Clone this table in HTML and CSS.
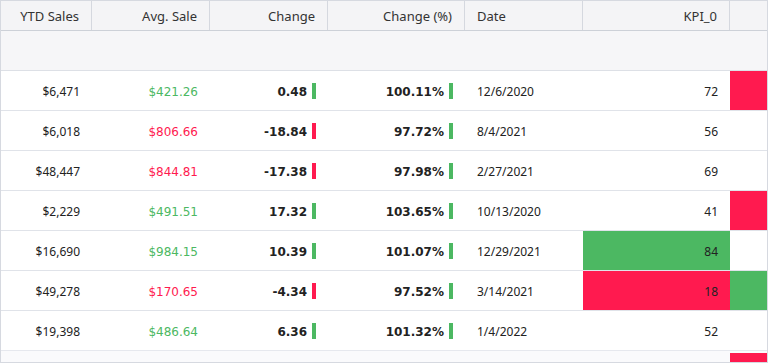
FILE: index.html
```html
<!DOCTYPE html>
<html lang="en">
<head>
    <meta charset="UTF-8">
    <meta name="viewport" content="width=device-width, initial-scale=1.0">
    <title>Sales Grid</title>
    <link rel="stylesheet" href="styles.css">
</head>
<body>

    <div class="grid">
        <div class="row head">
            <div class="cell right">YTD Sales</div>
            <div class="cell right">Avg. Sale</div>
            <div class="cell right">Change</div>
            <div class="cell right">Change (%)</div>
            <div class="cell">Date</div>
            <div class="cell right">KPI_0</div>
            <div class="cell last"></div>
        </div>

        <div class="row filter"></div>

        <div class="row">
            <div class="cell right">$6,471</div>
            <div class="cell right money up">$421.26</div>
            <div class="cell right num">0.48 <span class="bar up"></span></div>
            <div class="cell right num">100.11% <span class="bar up"></span></div>
            <div class="cell">12/6/2020</div>
            <div class="cell right">72</div>
            <div class="cell last bad"></div>
        </div>

        <div class="row">
            <div class="cell right">$6,018</div>
            <div class="cell right money down">$806.66</div>
            <div class="cell right num">-18.84 <span class="bar down"></span></div>
            <div class="cell right num">97.72% <span class="bar up"></span></div>
            <div class="cell">8/4/2021</div>
            <div class="cell right">56</div>
            <div class="cell last"></div>
        </div>

        <div class="row">
            <div class="cell right">$48,447</div>
            <div class="cell right money down">$844.81</div>
            <div class="cell right num">-17.38 <span class="bar down"></span></div>
            <div class="cell right num">97.98% <span class="bar up"></span></div>
            <div class="cell">2/27/2021</div>
            <div class="cell right">69</div>
            <div class="cell last"></div>
        </div>

        <div class="row">
            <div class="cell right">$2,229</div>
            <div class="cell right money up">$491.51</div>
            <div class="cell right num">17.32 <span class="bar up"></span></div>
            <div class="cell right num">103.65% <span class="bar up"></span></div>
            <div class="cell">10/13/2020</div>
            <div class="cell right">41</div>
            <div class="cell last bad"></div>
        </div>

        <div class="row">
            <div class="cell right">$16,690</div>
            <div class="cell right money up">$984.15</div>
            <div class="cell right num">10.39 <span class="bar up"></span></div>
            <div class="cell right num">101.07% <span class="bar up"></span></div>
            <div class="cell">12/29/2021</div>
            <div class="cell right good">84</div>
            <div class="cell last"></div>
        </div>

        <div class="row">
            <div class="cell right">$49,278</div>
            <div class="cell right money down">$170.65</div>
            <div class="cell right num">-4.34 <span class="bar down"></span></div>
            <div class="cell right num">97.52% <span class="bar up"></span></div>
            <div class="cell">3/14/2021</div>
            <div class="cell right bad">18</div>
            <div class="cell last good"></div>
        </div>

        <div class="row">
            <div class="cell right">$19,398</div>
            <div class="cell right money up">$486.64</div>
            <div class="cell right num">6.36 <span class="bar up"></span></div>
            <div class="cell right num">101.32% <span class="bar up"></span></div>
            <div class="cell">1/4/2022</div>
            <div class="cell right">52</div>
            <div class="cell last"></div>
        </div>

        <div class="row partial">
            <div class="cell right"></div>
            <div class="cell right"></div>
            <div class="cell right"></div>
            <div class="cell right"></div>
            <div class="cell"></div>
            <div class="cell right"></div>
            <div class="cell last bad"></div>
        </div>
    </div>

</body>
</html>
```

FILE: styles.css
```css
body {
    margin: 0;
    padding: 0;
    background: white;
    font-family: 'Noto Sans', sans-serif;
    color: #222;
}

.grid {
    box-sizing: border-box;
    width: 768px;
    height: 363px;
    border: 1px solid #d6d9e0;
    overflow: hidden;
    background: white;
}

.row {
    display: grid;
    grid-template-columns: 91px 118px 118px 137px 118px 147px 1fr;
    height: 40px;
    box-sizing: border-box;
    border-bottom: 1px solid #e0e3e9;
}

.cell {
    box-sizing: border-box;
    display: flex;
    align-items: center;
    padding: 2px 12px 0;
    font-size: 12px;
    white-space: nowrap;
    overflow: hidden;
}

.right {
    justify-content: flex-end;
}

.head {
    height: 30px;
    background: #f4f4f6;
    border-bottom: 1px solid #cdd1d8;
}

.head .cell {
    font-size: 13px;
    color: #333;
    padding-top: 0;
    border-right: 1px solid #d5d8df;
}

.head .cell.last {
    border-right: none;
}

.filter {
    display: block;
    background: #f6f6f8;
    border-bottom: 1px solid #dde0e6;
}

.partial {
    background: #fafafc;
    border-top: 1px solid #e6e8ee;
    margin-top: -1px;
}

.partial .cell.last {
    margin-top: 2px;
}

.money {
    font-family: 'DejaVu Sans', sans-serif;
}

.money.up { color: #4cb862; }
.money.down { color: #ff1a4f; }

.num {
    font-family: 'DejaVu Sans', sans-serif;
    font-weight: bold;
    color: #222;
    gap: 5px;
}

.bar {
    display: inline-block;
    width: 4px;
    height: 16px;
    margin-top: -2px;
}

.bar.up { background: #4cb862; }
.bar.down { background: #ff1a4f; }

.good { background: #4cb862; }
.bad { background: #ff1a4f; }
```
